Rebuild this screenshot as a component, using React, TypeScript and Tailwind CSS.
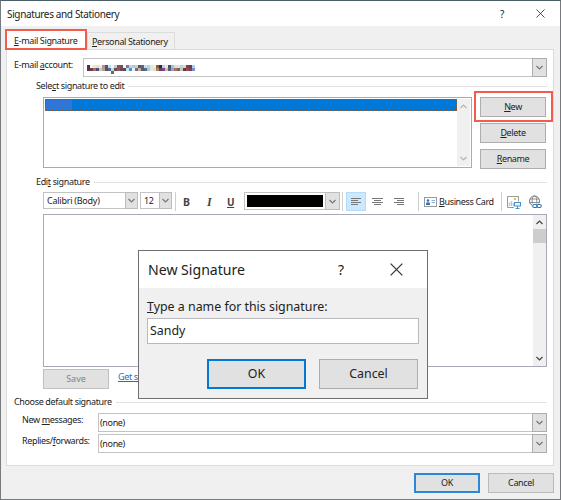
import type { ReactNode } from "react";

const mosaicTop = [
  "#4b2f55", "#fbf3e6", "#ece6d8", "#eadfd6", "#f3ead0", "#b98f86", "#3f5f93", "#bfe0f3", "#f8f4ea", "#a8d3ee",
  "#a04a3c", "#7a4f45", "#fdf3d0", "#6a7fae", "#e9c9b2", "#9fd0ee", "#dfc9c0", "#505a74", "#5f6478",
  "#bfe0f3", "#a9d6f0", "#f6e2c0", "#f7efc5", "#8f5a3f", "#1f2a55", "#b8d3ec", "#f7e7d2", "#4a4f66",
  "#8fc6ea", "#cfe3ef", "#f3dfbd", "#a9d6f0", "#e5d9c4", "#8a3f3a", "#5a3f6b", "#a9cfee",
];
const mosaicBottom = [
  "#5d3450", "#6a4055", "#a9714e", "#5b4a63", "#b7c8e2", "#b7a090", "#6b4a55", "#4f6a94", "#bfd9ef", "#7a4a3f",
  "#8b5a67", "#6a4a66", "#6f3f59", "#c0e4f2", "#4f8fc6", "#e6f5fb", "#8a6a5f", "#c9b0a0", "#4e5f76",
  "#5a6a7b", "#a9c9dc", "#d6ecf5", "#f0ddb0", "#a9826b", "#6b3f5b", "#7a4a86", "#e0b98a", "#4e5f86",
  "#8fa6c9", "#b0704f", "#7a5f6b", "#c9c7ac", "#5f3558", "#9a4a56", "#7a3f6f", "#7a8fd0",
];

const Chevron = ({ up, className = "" }: { up?: boolean; className?: string }) => (
  <svg width="7" height="5" viewBox="0 0 7 5" fill="none" stroke="currentColor" strokeWidth="1.2" className={className}>
    <path d={up ? "M0.5 4L3.5 1L6.5 4" : "M0.5 1L3.5 4L6.5 1"} />
  </svg>
);

const Close = ({ size }: { size: number }) => (
  <svg width={size} height={size} viewBox="0 0 10 10" fill="none" stroke="#333" strokeWidth="0.95">
    <path d="M0.5 0.5L9.5 9.5M9.5 0.5L0.5 9.5" />
  </svg>
);

const Combo = ({ className, children }: { className: string; children?: ReactNode }) => (
  <div className={`flex items-stretch border border-[#c3c3c6] bg-white ${className}`}>
    <div className="flex flex-1 items-center">{children}</div>
    <div className="-my-px -mr-px flex w-[15px] items-center justify-center border border-[#adadad] bg-[#e1e1e1] text-[#777]">
      <Chevron />
    </div>
  </div>
);

const Button = ({ className, children }: { className: string; children: ReactNode }) => (
  <button className={`flex items-center justify-center bg-[#e1e1e1] ${className}`}>
    <span>{children}</span>
  </button>
);

const Group = ({ className, children }: { className: string; children: ReactNode }) => (
  <div className={`flex items-center ${className}`}>
    <span>{children}</span>
    <div className="ml-[4px] h-px flex-1 bg-[#e2e2e4]" />
  </div>
);

const Align = ({ d }: { d: string }) => (
  <svg width="11" height="9" viewBox="0 0 11 9" stroke="#777" strokeWidth="1">
    <path d={d} />
  </svg>
);

const Separator = ({ className }: { className: string }) => (
  <div className={`h-[19px] w-px bg-[#cfcfcf] ${className}`} />
);

const Toolbar = () => (
  <div className="ml-[36px] mt-[4px] flex h-[19px] items-center">
    <div className="-mt-[2px] flex h-[17px] w-[95px] border border-[#c3c3c6]">
      <span className="flex-1 pl-[3px] leading-[15px] tracking-[-0.25px]">Calibri (Body)</span>
      <div className="-my-px -mr-px flex w-[13px] items-center justify-center border border-[#bdbdbd] bg-[#e1e1e1] text-[#777]">
        <Chevron />
      </div>
    </div>
    <div className="-mt-[2px] ml-[2px] flex h-[17px] w-[32px] border border-[#c3c3c6]">
      <span className="flex-1 pl-[3px] leading-[15px]">12</span>
      <div className="-my-px -mr-px flex w-[13px] items-center justify-center border border-[#bdbdbd] bg-[#e1e1e1] text-[#777]">
        <Chevron />
      </div>
    </div>
    <Separator className="ml-[3px]" />
    <span className="ml-[7px] w-[8px] text-[10.5px] font-bold text-[#444]">B</span>
    <span className="ml-[16px] w-[8px] font-['Liberation_Serif',serif] text-[12px] font-bold italic text-[#444]">I</span>
    <span className="ml-[12px] w-[8px] text-[10px] font-bold text-[#444] underline">U</span>
    <div className="-mt-px ml-[9px] flex h-[18px] w-[96px] border border-[#c3c3c6] bg-white">
      <div className="m-[2px] h-[12px] flex-1 bg-black" />
      <div className="-my-px -mr-px flex w-[15px] items-center justify-center border border-[#bdbdbd] bg-[#e1e1e1] text-[#777]">
        <Chevron />
      </div>
    </div>
    <Separator className="ml-[2px]" />
    <div className="ml-[3px] flex h-[19px] w-[20px] items-center justify-center border border-[#b5dbf8] bg-[#cce8ff]">
      <Align d="M0 1.5H10M0 3.5H7M0 5.5H10M0 7.5H7" />
    </div>
    <div className="ml-[6px] flex">
      <Align d="M0 1.5H11M2 3.5H9M0 5.5H11M2 7.5H9" />
    </div>
    <div className="ml-[10px] flex">
      <Align d="M1 1.5H11M4 3.5H11M1 5.5H11M4 7.5H11" />
    </div>
    <Separator className="ml-[14px]" />
    <svg className="ml-[5px]" width="13" height="10" viewBox="0 0 13 10" fill="none">
      <rect x="0.5" y="0.5" width="12" height="9" fill="#fff" stroke="#999" />
      <circle cx="4" cy="3.5" r="1.3" fill="#2f75b5" />
      <path d="M2 8V6.5Q2 5.3 4 5.3Q6 5.3 6 6.5V8Z" fill="#2f75b5" />
      <path d="M7.5 3.5H11M7.5 5.5H11" stroke="#8ab4dc" />
    </svg>
    <span className="ml-[2px] w-[55px] whitespace-nowrap tracking-[-0.36px]">
      <u>B</u>usiness Card
    </span>
    <Separator className="ml-[7px]" />
    <svg className="ml-[5px]" width="14" height="14" viewBox="0 0 14 14" fill="none">
      <path d="M11.5 6.5V1.5H0.5V12.5H7" stroke="#999" />
      <circle cx="8" cy="4" r="1.2" fill="#efb956" />
      <path d="M2.5 11V7.5M4.5 11V6M6.5 11V8" stroke="#a8cbe8" strokeWidth="1.4" />
      <rect x="7.5" y="7.5" width="6" height="3.5" fill="#eaf4fd" stroke="#4d8fcb" />
      <path d="M10.5 11V13M8.5 13.5H12.5" stroke="#4d8fcb" />
    </svg>
    <svg className="ml-[8px]" width="13" height="14" viewBox="0 0 13 14" fill="none">
      <circle cx="5.5" cy="6" r="5" stroke="#777" />
      <ellipse cx="5.5" cy="6" rx="2.3" ry="5" stroke="#777" strokeWidth="0.8" />
      <path d="M1 4H10M0.5 7.5H10.5" stroke="#777" strokeWidth="0.8" />
      <rect x="3" y="8.5" width="10" height="5" fill="#fff" />
      <rect x="3.7" y="9.5" width="4.6" height="3" rx="1.5" stroke="#2f75b5" strokeWidth="1.1" />
      <rect x="7.7" y="9.5" width="4.6" height="3" rx="1.5" stroke="#2f75b5" strokeWidth="1.1" />
    </svg>
  </div>
);

const NewSignature = () => (
  <div className="absolute left-[137px] top-[249px] flex h-[149px] w-[290px] flex-col border border-[#6f6f73] bg-[#f0f0f0] text-[12.4px] tracking-normal text-[#222]">
    <div className="flex h-[37px] shrink-0 items-center bg-white pl-[9px] pr-[24px]">
      <span className="text-[14.1px]">New Signature</span>
      <span className="ml-auto mr-[46px] text-[14px]">?</span>
      <Close size={13} />
    </div>
    <div className="mt-[9px] whitespace-nowrap pl-[8px] leading-[20px]">
      <u>T</u>ype a name for this signature:
    </div>
    <div className="ml-[8px] mt-px flex h-[26px] w-[272px] items-center border border-[#b9b9bf] bg-white pl-[2px]">
      Sandy
    </div>
    <div className="mt-[15px] flex justify-end gap-[13px] pr-[9px]">
      <Button className="h-[30px] w-[99px] border-2 border-[#0078d7]">OK</Button>
      <Button className="h-[30px] w-[99px] border border-[#adadad]">Cancel</Button>
    </div>
  </div>
);

export default function App() {
  return (
    <div className="relative flex h-[500px] w-[561px] flex-col overflow-hidden border border-b-[#77797c] border-l-[#777b80] border-r-[#77797c] border-t-[#4b5f69] bg-[#f0f0f0] font-['Noto_Sans',sans-serif] text-[9px] leading-[12px] tracking-[-0.36px] text-[#222]">
      <div className="flex h-[25px] shrink-0 items-center bg-white pl-[6px] pr-[15px]">
        <span className="text-[10px]">Signatures and Stationery</span>
        <span className="ml-auto mr-[32px] text-[10px]">?</span>
        <Close size={9} />
      </div>

      <div className="mt-[3px] flex h-[20px] shrink-0 items-end pl-[4px]">
        <div className="z-10 -mb-px flex h-[21px] w-[82px] items-center border-2 border-[#f25c4d] bg-white pl-[7px]">
          <span className="pt-[2px]"><u>E</u>-mail Signature</span>
        </div>
        <div className="flex h-[17px] w-[88px] items-center whitespace-nowrap border border-b-0 border-[#dcdcdc] bg-[#f0f0f0] pl-[4px]">
          <span className="pt-[2px]"><u>P</u>ersonal Stationery</span>
        </div>
      </div>

      <div className="ml-[5px] flex h-[417px] w-[548px] shrink-0 flex-col border border-[#dcdcdc] bg-white">
        <div className="mt-[8px] flex pl-[7px]">
          <span className="w-[69px] pt-px">E-mail <u>a</u>ccount:</span>
          <Combo className="h-[19px] w-[464px]">
            <div className="ml-[3px] mt-px">
              {[mosaicTop, mosaicBottom].map((row, i) => (
                <div key={i} className="flex">
                  {row.map((color, j) => (
                    <div key={j} className="h-[3px] w-[3px]" style={{ backgroundColor: color }} />
                  ))}
                </div>
              ))}
              <div className="-mb-[3px] ml-[24px] h-[3px] w-[3px] bg-[#5f6a78]" />
            </div>
          </Combo>
        </div>

        <Group className="ml-[29px] mr-[6px] mt-[3px]">Sele<u>c</u>t signature to edit</Group>

        <div className="ml-[36px] mt-[5px] flex h-[71px]">
          <div className="flex w-[429px] border border-[#a9a9b5] p-px">
            <div className="h-[12px] flex-1 border border-dashed border-[#8a5a35] bg-[#0078d7]">
              <div className="h-full w-[26px] bg-[#2f76d6]" />
            </div>
            <div className="flex w-[13px] flex-col items-center justify-between bg-[#f0f0f0] py-[5px] text-[#b5b5b5]">
              <Chevron up />
              <Chevron />
            </div>
          </div>
          <div className="ml-[2px] w-[79px]">
            <div className="-mt-[6px] h-[31px] border-2 border-[#f25c4d] pl-[4px] pt-[4px]">
              <Button className="h-[20px] w-[66px] border border-[#adadad]"><u>N</u>ew</Button>
            </div>
            <Button className="ml-[6px] mt-px h-[20px] w-[66px] border border-[#adadad]"><u>D</u>elete</Button>
            <Button className="ml-[6px] mt-[6px] h-[20px] w-[66px] border border-[#adadad]"><u>R</u>ename</Button>
          </div>
        </div>

        <Group className="ml-[29px] mr-[6px] mt-[8px]">Edi<u>t</u> signature</Group>
        <Toolbar />

        <div className="ml-[36px] mt-[3px] flex h-[153px] w-[504px] shrink-0 justify-end border border-[#a9a9b5]">
          <div className="flex w-[13px] flex-col items-center bg-[#f0f0f0] text-[#444]">
            <Chevron up className="mt-[5px]" />
            <div className="mt-[4px] h-[14px] w-full bg-[#cdcdcd]" />
            <Chevron className="mb-[5px] mt-auto" />
          </div>
        </div>

        <div className="ml-[36px] mt-[2px] flex">
          <Button className="h-[20px] w-[66px] border border-[#bfbfbf] tracking-normal text-[#838383]">Save</Button>
          <span className="ml-[9px] mt-[2px] whitespace-nowrap text-[#1a6fc9] underline">Get signature templates</span>
        </div>

        <Group className="ml-[7px] mr-[6px] mt-[7px]">Choose default signature</Group>
        <div className="ml-[15px] mt-[5px] flex">
          <span className="w-[76px] pt-px">New <u>m</u>essages:</span>
          <Combo className="h-[19px] w-[449px]"><span className="pl-px pt-px">(none)</span></Combo>
        </div>
        <div className="ml-[15px] mt-[2px] flex">
          <span className="w-[76px] whitespace-nowrap pt-px">Replies/<u>f</u>orwards:</span>
          <Combo className="h-[19px] w-[449px]"><span className="pl-px pt-px">(none)</span></Combo>
        </div>
      </div>

      <div className="mt-[7px] flex justify-end gap-[8px] pr-[6px]">
        <Button className="h-[20px] w-[66px] border-2 border-[#2b88d8]">OK</Button>
        <Button className="h-[20px] w-[66px] border border-[#bababa]">Cancel</Button>
      </div>

      <NewSignature />
    </div>
  );
}
